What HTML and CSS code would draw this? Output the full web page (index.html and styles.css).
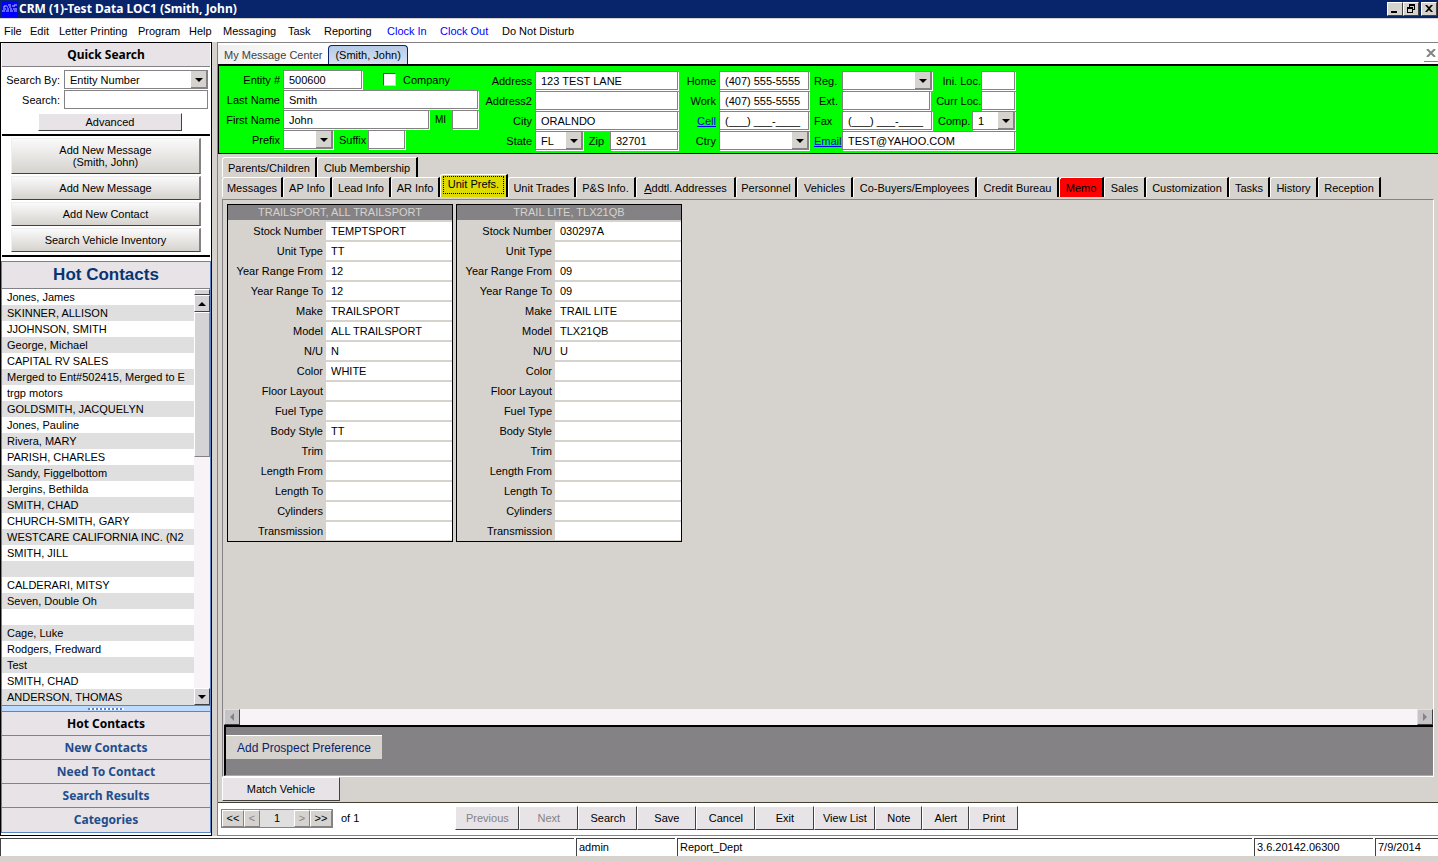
FILE: index.html
```html
<!DOCTYPE html>
<html lang="en">
<head>
    <meta charset="UTF-8">
    <meta name="viewport" content="width=device-width, initial-scale=1.0">
    <title>CRM (1)-Test Data LOC1 (Smith, John)</title>
    <link rel="stylesheet" href="styles.css">
</head>
<body>
    <!-- Title bar -->
    <header class="titlebar">
        <svg class="logo" width="16" height="16" viewBox="0 0 16 16">
            <rect width="16" height="16" fill="#0000ff"/>
            <path d="M1 6h2M2 5h3M5 6h1M6 4h3M7 6h2M10 5h3M12 4h3M1 8h3M5 8h2M8 8h2M11 8h4M0 10h3M4 10h3M8 10h3M12 10h3" stroke="#c6c3ff" fill="none"/>
        </svg>
        <h1>CRM (1)-Test Data LOC1 (Smith, John)</h1>
        <div class="window-buttons">
            <button aria-label="Minimize"><svg width="12" height="10" viewBox="0 0 12 10"><path d="M2 7h6v2H2z"/></svg></button>
            <button aria-label="Restore"><svg width="12" height="10" viewBox="0 0 12 10"><path d="M4 0h6v6H8V5h1V2H5v1H4zM2 3h6v6H2zm1 2v3h4V5z" fill-rule="evenodd"/></svg></button>
            <button aria-label="Close" class="close"><svg width="12" height="10" viewBox="0 0 12 10"><path d="M2 1h2l2 2 2-2h2L7 4.500l3 3.500H8L6 6 4 8H2l3-3.500z"/></svg></button>
        </div>
    </header>

    <nav class="menubar">
        <a href="#">File</a>
        <a href="#">Edit</a>
        <a href="#">Letter Printing</a>
        <a href="#">Program</a>
        <a href="#">Help</a>
        <a href="#">Messaging</a>
        <a href="#">Task</a>
        <a href="#">Reporting</a>
        <a href="#" class="clock">Clock In</a>
        <a href="#" class="clock">Clock Out</a>
        <a href="#">Do Not Disturb</a>
    </nav>

    <main class="workspace">
        <!-- Sidebar -->
        <aside class="sidebar">
            <h2 class="quick-title">Quick Search</h2>
            <div class="quick-search">
                <label for="search-by">Search By:</label>
                <select id="search-by"><option>Entity Number</option></select>
                <label for="search-text">Search:</label>
                <input type="text" id="search-text">
                <button class="flat-button">Advanced</button>
            </div>
            <div class="quick-actions">
                <button class="tall">Add New Message<br>(Smith, John)</button>
                <button>Add New Message</button>
                <button>Add New Contact</button>
                <button>Search Vehicle Inventory</button>
            </div>
            <div class="outlook">
                <h2 class="outlook-title">Hot Contacts</h2>
                <div class="contacts">
                    <ul>
                        <li>Jones, James</li>
                        <li>SKINNER, ALLISON</li>
                        <li>JJOHNSON, SMITH</li>
                        <li>George, Michael</li>
                        <li>CAPITAL RV SALES</li>
                        <li>Merged to Ent#502415, Merged to E</li>
                        <li>trgp motors</li>
                        <li>GOLDSMITH, JACQUELYN</li>
                        <li>Jones, Pauline</li>
                        <li>Rivera, MARY</li>
                        <li>PARISH, CHARLES</li>
                        <li>Sandy, Figgelbottom</li>
                        <li>Jergins, Bethilda</li>
                        <li>SMITH, CHAD</li>
                        <li>CHURCH-SMITH, GARY</li>
                        <li>WESTCARE CALIFORNIA INC. (N2</li>
                        <li>SMITH, JILL</li>
                        <li></li>
                        <li>CALDERARI, MITSY</li>
                        <li>Seven, Double Oh</li>
                        <li></li>
                        <li>Cage, Luke</li>
                        <li>Rodgers, Fredward</li>
                        <li>Test</li>
                        <li>SMITH, CHAD</li>
                        <li>ANDERSON, THOMAS</li>
                    </ul>
                    <div class="scrollbar">
                        <span class="split-box"></span>
                        <button aria-label="Scroll up"><svg width="8" height="4" viewBox="0 0 8 4"><path d="M0 4l4-4 4 4z"/></svg></button>
                        <span class="thumb"></span>
                        <button class="down" aria-label="Scroll down"><svg width="8" height="4" viewBox="0 0 8 4"><path d="M0 0l4 4 4-4z"/></svg></button>
                    </div>
                </div>
                <div class="splitter"><span></span></div>
                <nav class="outlook-nav">
                    <button class="current">Hot Contacts</button>
                    <button>New Contacts</button>
                    <button>Need To Contact</button>
                    <button>Search Results</button>
                    <button>Categories</button>
                </nav>
            </div>
        </aside>

        <!-- Contact record -->
        <section class="record">
            <div class="doc-tabs">
                <button>My Message Center</button>
                <button class="current">(Smith, John)</button>
                <button class="close-doc" aria-label="Close tab"><svg width="10" height="8" viewBox="0 0 10 8"><path d="M1 0l8 8M9 0L1 8" stroke="#848284" stroke-width="2"/></svg></button>
            </div>

            <form class="entity">
                <div class="group person">
                    <div class="row">
                        <label class="lead" for="entity">Entity #</label>
                        <input type="text" id="entity" class="w-entity" value="500600">
                        <label class="company"><input type="checkbox">Company</label>
                    </div>
                    <div class="row">
                        <label class="lead" for="last">Last Name</label>
                        <input type="text" id="last" class="fill" value="Smith">
                    </div>
                    <div class="row">
                        <label class="lead" for="first">First Name</label>
                        <input type="text" id="first" class="fill" value="John">
                        <label class="mi" for="mi">MI</label>
                        <input type="text" id="mi" class="w-mi">
                    </div>
                    <div class="row">
                        <label class="lead" for="prefix">Prefix</label>
                        <select id="prefix" class="w-prefix"><option></option></select>
                        <label for="suffix">Suffix</label>
                        <input type="text" id="suffix" class="w-suffix">
                    </div>
                </div>
                <div class="group address">
                    <div class="row">
                        <label class="lead" for="address">Address</label>
                        <input type="text" id="address" class="fill" value="123 TEST LANE">
                    </div>
                    <div class="row">
                        <label class="lead" for="address2">Address2</label>
                        <input type="text" id="address2" class="fill">
                    </div>
                    <div class="row">
                        <label class="lead" for="city">City</label>
                        <input type="text" id="city" class="fill" value="ORALNDO">
                    </div>
                    <div class="row">
                        <label class="lead" for="state">State</label>
                        <select id="state" class="w-state"><option>FL</option></select>
                        <label class="zip" for="zip">Zip</label>
                        <input type="text" id="zip" class="fill" value="32701">
                    </div>
                </div>
                <div class="group phone">
                    <div class="row">
                        <label class="lead" for="home">Home</label>
                        <input type="text" id="home" class="fill" value="(407) 555-5555">
                    </div>
                    <div class="row">
                        <label class="lead" for="work">Work</label>
                        <input type="text" id="work" class="fill" value="(407) 555-5555">
                    </div>
                    <div class="row">
                        <a class="lead" href="#">Cell</a>
                        <input type="text" class="fill" aria-label="Cell" value="(___) ___-____">
                    </div>
                    <div class="row">
                        <label class="lead" for="ctry">Ctry</label>
                        <select id="ctry" class="fill"><option></option></select>
                    </div>
                </div>
                <div class="group misc">
                    <div class="row">
                        <label class="lead" for="reg">Reg.</label>
                        <select id="reg" class="w-misc"><option></option></select>
                        <label class="loc" for="ini">Ini. Loc.</label>
                        <input type="text" id="ini" class="w-loc">
                    </div>
                    <div class="row">
                        <label class="lead ext" for="ext">Ext.</label>
                        <input type="text" id="ext" class="w-misc">
                        <label class="loc" for="curr">Curr Loc.</label>
                        <input type="text" id="curr" class="w-loc">
                    </div>
                    <div class="row">
                        <label class="lead" for="fax">Fax</label>
                        <input type="text" id="fax" class="w-misc" value="(___) ___-____">
                        <label class="loc" for="comp">Comp.</label>
                        <select id="comp" class="w-comp"><option>1</option></select>
                    </div>
                    <div class="row">
                        <a class="lead" href="#">Email</a>
                        <input type="text" class="fill" aria-label="Email" value="TEST@YAHOO.COM">
                    </div>
                </div>
            </form>

            <div class="record-body">
                <div class="tabs tabs-top">
                    <button>Parents/Children</button>
                    <button>Club Membership</button>
                </div>
                <div class="tabs tabs-main">
                    <button>Messages</button>
                    <button>AP Info</button>
                    <button>Lead Info</button>
                    <button>AR Info</button>
                    <button class="current"><span>Unit Prefs.</span></button>
                    <button>Unit Trades</button>
                    <button>P&amp;S Info.</button>
                    <button><u>A</u>ddtl. Addresses</button>
                    <button>Personnel</button>
                    <button>Vehicles</button>
                    <button>Co-Buyers/Employees</button>
                    <button>Credit Bureau</button>
                    <button class="memo">Memo</button>
                    <button>Sales</button>
                    <button>Customization</button>
                    <button>Tasks</button>
                    <button>History</button>
                    <button>Reception</button>
                </div>

                <div class="panel">
                    <div class="cards">
                        <section class="card">
                            <h3>TRAILSPORT, ALL TRAILSPORT</h3>
                            <label>Stock Number<input type="text" value="TEMPTSPORT"></label>
                            <label>Unit Type<input type="text" value="TT"></label>
                            <label>Year Range From<input type="text" value="12"></label>
                            <label>Year Range To<input type="text" value="12"></label>
                            <label>Make<input type="text" value="TRAILSPORT"></label>
                            <label>Model<input type="text" value="ALL TRAILSPORT"></label>
                            <label>N/U<input type="text" value="N"></label>
                            <label>Color<input type="text" value="WHITE"></label>
                            <label>Floor Layout<input type="text"></label>
                            <label>Fuel Type<input type="text"></label>
                            <label>Body Style<input type="text" value="TT"></label>
                            <label>Trim<input type="text"></label>
                            <label>Length From<input type="text"></label>
                            <label>Length To<input type="text"></label>
                            <label>Cylinders<input type="text"></label>
                            <label>Transmission<input type="text"></label>
                        </section>
                        <section class="card">
                            <h3>TRAIL LITE, TLX21QB</h3>
                            <label>Stock Number<input type="text" value="030297A"></label>
                            <label>Unit Type<input type="text"></label>
                            <label>Year Range From<input type="text" value="09"></label>
                            <label>Year Range To<input type="text" value="09"></label>
                            <label>Make<input type="text" value="TRAIL LITE"></label>
                            <label>Model<input type="text" value="TLX21QB"></label>
                            <label>N/U<input type="text" value="U"></label>
                            <label>Color<input type="text"></label>
                            <label>Floor Layout<input type="text"></label>
                            <label>Fuel Type<input type="text"></label>
                            <label>Body Style<input type="text"></label>
                            <label>Trim<input type="text"></label>
                            <label>Length From<input type="text"></label>
                            <label>Length To<input type="text"></label>
                            <label>Cylinders<input type="text"></label>
                            <label>Transmission<input type="text"></label>
                        </section>
                    </div>
                    <div class="hscroll">
                        <button aria-label="Scroll left"><svg width="4" height="8" viewBox="0 0 4 8"><path d="M4 0v8L0 4z"/></svg></button>
                        <button aria-label="Scroll right"><svg width="4" height="8" viewBox="0 0 4 8"><path d="M0 0v8l4-4z"/></svg></button>
                    </div>
                    <div class="panel-footer">
                        <button>Add Prospect Preference</button>
                    </div>
                </div>
                <button class="flat-button match">Match Vehicle</button>
            </div>

            <div class="toolbar">
                <div class="pager">
                    <button>&lt;&lt;</button>
                    <button disabled>&lt;</button>
                    <input type="text" aria-label="Page" value="1">
                    <button disabled>&gt;</button>
                    <button>&gt;&gt;</button>
                </div>
                <span>of 1</span>
                <div class="commands">
                    <button class="flat-button" disabled>Previous</button>
                    <button class="flat-button" disabled>Next</button>
                    <button class="flat-button">Search</button>
                    <button class="flat-button">Save</button>
                    <button class="flat-button">Cancel</button>
                    <button class="flat-button">Exit</button>
                    <button class="flat-button">View List</button>
                    <button class="flat-button">Note</button>
                    <button class="flat-button">Alert</button>
                    <button class="flat-button">Print</button>
                </div>
            </div>
        </section>
    </main>

    <footer class="statusbar">
        <span></span>
        <span>admin</span>
        <span>Report_Dept</span>
        <span>3.6.20142.06300</span>
        <span>7/9/2014</span>
    </footer>
</body>
</html>
```
FILE: styles.css
```css
* {
    box-sizing: border-box;
}

body {
    margin: 0;
    min-height: 100vh;
    display: flex;
    flex-direction: column;
    background: #d6d3ce;
    color: #000;
    font-family: "Liberation Sans", Arial, sans-serif;
    font-size: 11px;
    line-height: 14px;
    white-space: nowrap;
}

h1, h2, h3, ul {
    margin: 0;
    padding: 0;
}

button, input, select {
    font: inherit;
    color: inherit;
    margin: 0;
    padding: 0;
    border: none;
    border-radius: 0;
    background: none;
}

input[type="text"], select {
    height: 19px;
    min-width: 0;
    padding: 0 5px;
    border: 1px solid #848284;
    background-color: #fff;
    box-shadow: 1px 1px 0 #fff;
}

select {
    appearance: none;
    padding-right: 18px;
    background-image: url("data:image/svg+xml,%3Csvg xmlns='http://www.w3.org/2000/svg' width='16' height='17'%3E%3Cpath fill='%23d6d3ce' d='M0 0h16v17H0z'/%3E%3Cpath fill='%23848284' d='M15 0h1v17H0v-1h15z'/%3E%3Cpath d='M4 7h8l-4 4z'/%3E%3C/svg%3E");
    background-repeat: no-repeat;
    background-position: right top;
}

/* Title bar and menu */
.titlebar {
    display: flex;
    align-items: center;
    height: 19px;
    padding: 0 1px 0 2px;
    background: #08246b;
    border-bottom: 1px solid #d6d3ce;
    color: #fff;
}

.titlebar h1 {
    flex: 1;
    padding-left: 1px;
    font-family: "Noto Sans", sans-serif;
    font-size: 12px;
    line-height: 16px;
}

.window-buttons {
    display: flex;
}

.window-buttons button {
    display: flex;
    width: 16px;
    height: 14px;
    padding: 1px;
    background: #d6d3ce;
    border: 1px solid #fff;
    border-right-color: #424142;
    border-bottom-color: #424142;
}

.window-buttons .close {
    margin-left: 2px;
}

.menubar {
    display: grid;
    grid-template-columns: 26px 29px 79px 51px 34px 65px 36px 63px 53px 62px auto;
    justify-content: start;
    align-items: center;
    height: 23px;
    padding-left: 4px;
    background: #fff;
}

.menubar a {
    color: #000;
    text-decoration: none;
}

.menubar .clock {
    color: #0000ff;
}

.workspace {
    flex: 1;
    display: flex;
    gap: 5px;
}

/* Sidebar */
.sidebar {
    display: flex;
    flex-direction: column;
    width: 212px;
    padding: 0 1px;
    border: 1px solid #000;
    background: #fff;
}

.quick-title {
    height: 24px;
    line-height: 24px;
    background: #e7e3e7;
    border-bottom: 1px solid #848284;
    font-family: "Noto Sans", sans-serif;
    font-size: 12px;
    text-align: center;
}

.quick-search {
    display: grid;
    grid-template-columns: 58px 144px;
    column-gap: 4px;
    row-gap: 1px;
    align-items: center;
    padding: 3px 0 3px;
    border-bottom: 2px solid #000;
}

.quick-search label {
    text-align: right;
}

.quick-search .flat-button {
    grid-column: 1 / -1;
    justify-self: start;
    width: 144px;
    height: 18px;
    margin: 3px 0 0 36px;
}

.flat-button {
    background: #e7e3e7;
    border: 1px solid #fff;
    border-right-color: #424142;
    border-bottom-color: #424142;
}

.flat-button:disabled {
    color: #848284;
}

.quick-actions {
    display: flex;
    flex-direction: column;
    gap: 2px;
    padding: 2px 9px 3px;
    border-bottom: 2px solid #000;
}

.quick-actions button {
    height: 24px;
    background: linear-gradient(#fafafa, #d6d3ce);
    border: 1px solid #efefef;
    border-right: 2px solid #848284;
    border-bottom: 1px solid #424142;
    line-height: 12px;
}

.quick-actions .tall {
    height: 36px;
}

.outlook {
    flex: 1;
    display: flex;
    flex-direction: column;
    margin: 4px -1px 2px;
    border: 1px solid #5a86c6;
}

.outlook-title {
    height: 27px;
    line-height: 26px;
    background: #e7e3e7;
    border-bottom: 1px solid #848284;
    color: #083473;
    font-size: 17px;
    text-align: center;
}

.contacts {
    flex: 1;
    display: flex;
}

.contacts ul {
    flex: 1;
    list-style: none;
}

.contacts li {
    height: 16px;
    padding-left: 5px;
    line-height: 16px;
}

.contacts li:nth-child(even) {
    background: #dedfde;
}

.scrollbar {
    display: flex;
    flex-direction: column;
    width: 16px;
    background: #f7f3f7;
}

.scrollbar button, .split-box, .thumb {
    height: 17px;
    background: #d6d3d6;
    border: 1px solid #fff;
    border-right-color: #424142;
    border-bottom-color: #424142;
}

.scrollbar button {
    display: flex;
    align-items: center;
    justify-content: center;
}

.scrollbar .split-box {
    height: 6px;
}

.scrollbar .thumb {
    height: 145px;
    border-right-color: #848284;
    border-bottom-color: #848284;
}

.scrollbar .down {
    margin-top: auto;
}

.splitter {
    display: flex;
    justify-content: center;
    align-items: center;
    height: 7px;
    background: #bddbff;
    border-top: 1px solid #5a86c6;
    border-bottom: 1px solid #5a86c6;
}

.splitter span {
    width: 36px;
    height: 2px;
    background: repeating-linear-gradient(90deg, #5a86c6 0 2px, #fff 2px 4px);
}

.outlook-nav {
    display: flex;
    flex-direction: column;
}

.outlook-nav button {
    height: 24px;
    background: #e7e3e7;
    border-bottom: 1px solid #848284;
    color: #214d8c;
    font-family: "Noto Sans", sans-serif;
    font-size: 12px;
    font-weight: bold;
}

.outlook-nav button:last-child {
    border-bottom: none;
}

.outlook-nav .current {
    color: #000;
}

/* Record header */
.record {
    flex: 1;
    min-width: 0;
    display: flex;
    flex-direction: column;
    border: 1px solid #848284;
    border-right: none;
    background: #fff;
}

.doc-tabs {
    display: flex;
    align-items: flex-end;
    height: 23px;
    border-bottom: 2px solid #000;
}

.doc-tabs button {
    height: 19px;
    padding: 0 6px;
    background: linear-gradient(90deg, #efefef, #fff);
    color: #424142;
}

.doc-tabs .current {
    background: linear-gradient(#b5cbe7, #d6dfef);
    border: 1px solid #08246b;
    border-bottom: none;
    border-radius: 4px 4px 0 0;
    color: #000;
}

.doc-tabs .close-doc {
    height: 17px;
    margin: 0 0 2px auto;
    padding: 0 2px;
    background: none;
    border-bottom: 1px solid #848284;
}

.entity {
    display: flex;
    align-items: flex-start;
    padding: 3px 0;
    background: #00ff00;
    border-left: 1px solid #000;
    border-bottom: 1px solid #000;
}

.group {
    display: flex;
    flex-direction: column;
    gap: 1px;
    padding-top: 2px;
}

.person {
    width: 259px;
    padding-top: 1px;
}

.address {
    width: 200px;
}

.phone {
    width: 131px;
}

.misc {
    width: 206px;
}

.row {
    display: flex;
    align-items: center;
}

.lead {
    width: 64px;
    padding-right: 3px;
    text-align: right;
}

.address .lead {
    width: 57px;
}

.phone .lead {
    width: 41px;
}

.misc .lead {
    width: 33px;
    padding-right: 0;
    padding-left: 5px;
    text-align: left;
}

.misc .ext {
    padding-left: 10px;
}

.fill {
    flex: 1;
}

.w-entity {
    width: 79px;
}

.w-mi {
    width: 26px;
}

.w-prefix {
    width: 50px;
}

.w-suffix {
    width: 37px;
    margin-left: 2px;
}

.w-prefix + label {
    padding-left: 6px;
}

.w-state {
    width: 48px;
}

.w-misc {
    width: 90px;
}

.w-loc {
    width: 34px;
}

.w-comp {
    width: 43px;
}

.company {
    display: flex;
    align-items: center;
    gap: 7px;
    margin-left: 21px;
}

.company input {
    appearance: none;
    width: 13px;
    height: 13px;
    background: #fff;
    border: 1px solid #d6d3ce;
    border-top-color: #424142;
    border-left-color: #424142;
}

.mi {
    padding: 0 6px;
    font-size: 10px;
}

.zip {
    width: 27px;
    text-align: center;
}

.loc {
    flex: 1;
    padding-left: 6px;
    text-align: right;
}

.loc[for="comp"] {
    text-align: left;
}

/* Tabs and preference cards */
.record-body {
    flex: 1;
    display: flex;
    flex-direction: column;
    padding: 3px 4px 1px;
    background: #d6d3ce;
    border-bottom: 1px solid #424131;
}

.tabs {
    display: grid;
    justify-content: start;
    height: 20px;
}

.tabs-top {
    grid-template-columns: 95px 101px;
}

.tabs-main {
    grid-template-columns: 61px 49px 59px 49px 68px 68px 60px 100px 61px 56px 124px 82px 45px 42px 83px 41px 48px 63px;
}

.tabs button {
    border-top: 1px solid #fff;
    border-left: 1px solid #fff;
    border-right: 2px solid #000;
    border-radius: 3px 0 0 0;
}

.tabs .current {
    margin: -3px 0 0;
    padding: 1px 2px 3px;
    background: #dedb00;
}

.tabs .current span {
    display: block;
    height: 100%;
    border: 1px dotted #000;
}

.tabs .memo {
    background: #ff0000;
}

.panel {
    flex: 1;
    display: flex;
    flex-direction: column;
    margin-top: 2px;
    border: 1px solid #fff;
    border-top-color: #848284;
    border-left-color: #848284;
}

.cards {
    flex: 1;
    display: flex;
    align-items: flex-start;
    gap: 3px;
    padding: 4px;
}

.card {
    width: 226px;
    border: 1px solid #000;
}

.card h3 {
    height: 15px;
    margin-bottom: 1px;
    background: #848284;
    color: #d6d3ce;
    font-size: 11px;
    font-weight: normal;
    text-align: center;
}

.card label {
    display: flex;
    align-items: center;
    justify-content: flex-end;
    gap: 3px;
    height: 20px;
}

.card input[type="text"] {
    width: 126px;
    height: 18px;
    border: none;
    box-shadow: none;
}

.hscroll {
    display: flex;
    justify-content: space-between;
    height: 16px;
    margin: 0 0 0 1px;
    background: #f7f3f7;
}

.hscroll button {
    display: flex;
    align-items: center;
    justify-content: center;
    width: 16px;
    background: #c6c3c6;
    border: 1px solid #dedfde;
    border-right-color: #424142;
    border-bottom-color: #424142;
}

.hscroll svg {
    fill: #848284;
}

.panel-footer {
    margin-left: 1px;
    padding: 8px 0 16px;
    background: #848284;
    border-top: 2px solid #000;
    border-left: 2px solid #000;
    border-bottom: 1px solid #adaaad;
}

.panel-footer button {
    width: 156px;
    height: 24px;
    background: #d6d3ce;
    border-top: 1px solid #fff;
    color: #08246b;
    font-size: 12px;
}

.match {
    width: 118px;
    height: 24px;
}

/* Bottom toolbar and status bar */
.toolbar {
    display: flex;
    align-items: center;
    height: 32px;
    padding: 0 0 2px 3px;
}

.pager {
    display: grid;
    grid-template-columns: 22px 16px 34px 16px 22px;
    height: 19px;
    margin-right: 8px;
    border: 1px solid #848284;
}

.pager button {
    background: #d6d3ce;
    border: 1px solid #fff;
    border-right-color: #848284;
    border-bottom-color: #848284;
}

.pager button:disabled {
    color: #848284;
}

.pager input[type="text"] {
    height: 17px;
    border: none;
    background: #dedfde;
    box-shadow: none;
    text-align: center;
}

.commands {
    display: grid;
    grid-template-columns: 64px 59px 59px 59px 59px 59px 61px 47px 47px 49px;
    height: 24px;
    margin-left: 96px;
}

.statusbar {
    display: grid;
    grid-template-columns: 574px 99px 1fr 119px 63px;
    gap: 2px;
    height: 21px;
    padding-top: 2px;
    background: #fff;
    border-bottom: 1px solid #d6d3ce;
    margin-bottom: 4px;
}

.statusbar span {
    padding: 1px 2px;
    border-top: 1px solid #424142;
    border-left: 1px solid #424142;
}
```
